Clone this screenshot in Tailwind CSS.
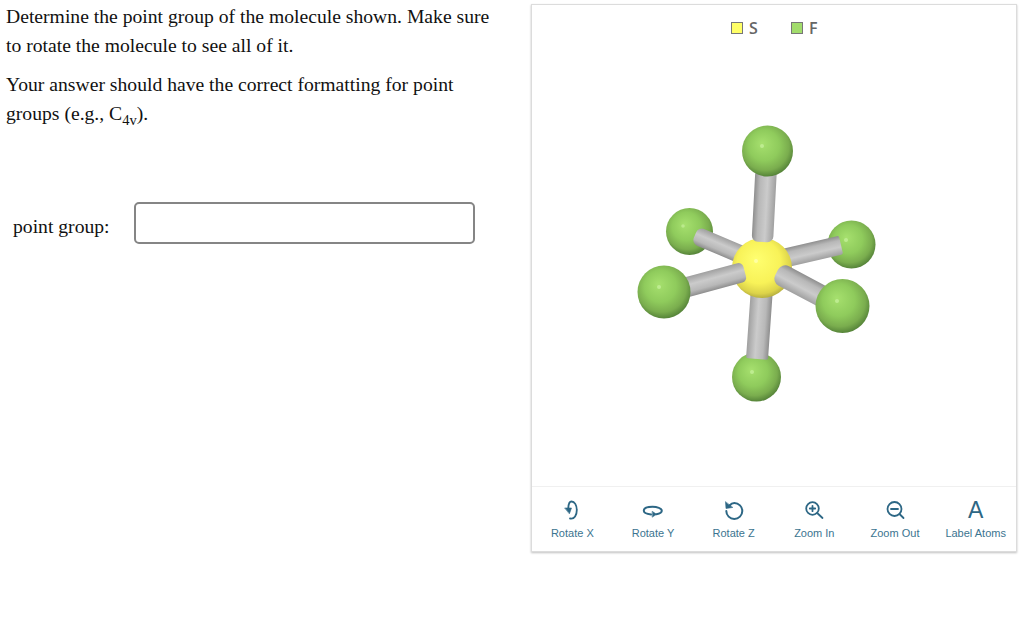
<!DOCTYPE html>
<html>
<head>
<meta charset="utf-8">
<script src="https://cdn.jsdelivr.net/npm/@tailwindcss/browser@4"></script>
</head>
<body class="bg-white">
<div class="flex w-[1024px] h-[630px] overflow-hidden">
  <div class="w-[531px] shrink-0 pl-[6px] pt-[2px] font-['Liberation_Serif',serif] text-[19.65px] leading-[29px] text-[#111]">
    <p class="mb-[10px]">Determine the point group of the molecule shown. Make sure<br>to rotate the molecule to see all of it.</p>
    <p>Your answer should have the correct formatting for point<br>groups (e.g., C<sub class="text-[14.5px] leading-none align-[-1px]">4v</sub>).</p>
    <div class="flex items-center mt-[74px] pl-[7px]">
      <span class="w-[121px] pt-[6px]">point group:</span>
      <div class="w-[341px] h-[42px] border-2 border-[#858585] rounded-[5px] bg-white"></div>
    </div>
  </div>
  <div class="w-[486px] h-[548px] mt-[4px] flex flex-col border border-[#dcdcdc] shadow-[0_1px_2px_rgba(0,0,0,0.25)] bg-white">
    <div class="h-[44px] flex items-start justify-center gap-[34px] pt-[13px] font-['Open_Sans',sans-serif] text-[16px] leading-[20px] font-semibold text-[#666]">
      <div class="flex items-center gap-[6px] w-[26px]"><span class="w-[12px] h-[12px] shrink-0 bg-[#ffff66] border-[1.5px] border-[#777]"></span>S</div>
      <div class="flex items-center gap-[6px] w-[26px]"><span class="w-[12px] h-[12px] shrink-0 bg-[#a2dc6c] border-[1.5px] border-[#777]"></span>F</div>
    </div>
    <svg class="block flex-1 w-full" width="484" height="437" viewBox="532 49 484 437">
      <defs>
        <radialGradient id="g" cx="0.47" cy="0.43" r="0.6" fx="0.39" fy="0.35">
          <stop offset="0" stop-color="#a6e06e"/>
          <stop offset="0.5" stop-color="#8fcb5c"/>
          <stop offset="0.78" stop-color="#7aad4e"/>
          <stop offset="1" stop-color="#4d7a34"/>
        </radialGradient>
        <radialGradient id="y" cx="0.48" cy="0.43" r="0.6" fx="0.4" fy="0.35">
          <stop offset="0" stop-color="#ffff70"/>
          <stop offset="0.6" stop-color="#f8f258"/>
          <stop offset="0.85" stop-color="#dcd34a"/>
          <stop offset="1" stop-color="#a8a23c"/>
        </radialGradient>
        <linearGradient id="b" x1="0" y1="0" x2="0" y2="1">
          <stop offset="0" stop-color="#a0a0a0"/>
          <stop offset="0.4" stop-color="#cbcbcb"/>
          <stop offset="0.75" stop-color="#b8b8b8"/>
          <stop offset="1" stop-color="#8e8e8e"/>
        </linearGradient>
      </defs>
      <circle cx="689.5" cy="231.5" r="23.5" fill="url(#g)"/>
      <circle cx="683" cy="226" r="1.8" fill="#c4f09a" opacity="0.7"/>
      <circle cx="851.5" cy="244.5" r="24" fill="url(#g)"/>
      <circle cx="846" cy="240" r="2" fill="#c4f09a" opacity="0.8"/>
      <circle cx="756.5" cy="377" r="24.5" fill="url(#g)"/>
      <circle cx="752" cy="372" r="2" fill="#c4f09a" opacity="0.8"/>
      <rect x="0" y="-9" width="60" height="18" rx="6" fill="url(#b)" transform="translate(695 235) rotate(23)"/>
      <rect x="0" y="-9.5" width="64" height="19" rx="2" fill="url(#b)" transform="translate(841 245) rotate(167)"/>
      <rect x="0" y="-11" width="68" height="22" rx="2" fill="url(#b)" transform="translate(757 359) rotate(-86)"/>
      <circle cx="762" cy="268" r="30" fill="url(#y)"/>
      <circle cx="756" cy="261" r="2" fill="#ffffb0" opacity="0.8"/>
      <rect x="-3" y="-10.75" width="73" height="21.5" rx="6" fill="url(#b)" transform="translate(766 172) rotate(93)"/>
      <rect x="-3" y="-10" width="70" height="20" rx="5" fill="url(#b)" transform="translate(680 289) rotate(-15)"/>
      <rect x="-3" y="-11" width="60" height="22" rx="8" fill="url(#b)" transform="translate(827 299) rotate(-152)"/>
      <circle cx="767.5" cy="151" r="25.5" fill="url(#g)"/>
      <circle cx="762" cy="146" r="2" fill="#c4f09a" opacity="0.8"/>
      <circle cx="664" cy="292" r="26.5" fill="url(#g)"/>
      <circle cx="659" cy="287" r="2" fill="#c4f09a" opacity="0.8"/>
      <circle cx="842.5" cy="306" r="27" fill="url(#g)"/>
      <circle cx="837" cy="301" r="2" fill="#c4f09a" opacity="0.8"/>
    </svg>
    <div class="h-[65px] grid grid-cols-6 border-t border-[#f0f0f0] font-['Liberation_Sans',sans-serif] text-[11px] leading-[14px] text-[#3b7490]">
      <div class="flex flex-col items-center pt-[11px] gap-[4px]">
        <svg class="w-[24px] h-[24px]" viewBox="0 0 24 24" fill="none" stroke="#2d6785" stroke-width="1.8" stroke-linecap="round">
          <path d="M10 20.5C14.5 21.5 16.8 17 16.8 12C16.8 7 14.5 3.5 11.5 3.5C9.5 3.5 8.5 6 8.3 10"/>
          <path d="M5 10L11.5 10L9.5 15.5Z" fill="#2d6785" stroke-width="0.6"/>
        </svg>
        <span>Rotate X</span>
      </div>
      <div class="flex flex-col items-center pt-[11px] gap-[4px]">
        <svg class="w-[24px] h-[24px]" viewBox="0 0 24 24" fill="none" stroke="#2d6785" stroke-width="2" stroke-linecap="round">
          <path d="M10 16.5C5.5 16 2.8 14.8 2.8 12.8C2.8 10.2 7 8.8 11.5 8.8C16 8.8 20.8 10.2 20.8 12.8C20.8 14.8 18.5 15.8 15.5 16.3"/>
          <path d="M11.5 13.5L15.5 16.3L11.5 19Z" fill="#2d6785" stroke-width="0.6"/>
        </svg>
        <span>Rotate Y</span>
      </div>
      <div class="flex flex-col items-center pt-[11px] gap-[4px]">
        <svg class="w-[24px] h-[24px]" viewBox="0 0 24 24" fill="none" stroke="#2d6785" stroke-width="2" stroke-linecap="round">
          <path d="M7.5 7.5C8.8 6 10.3 5 12.3 5C16.7 5 20.3 8.6 20.3 13C20.3 17.4 16.7 21 12.3 21C7.9 21 4.3 17.4 4.3 13"/>
          <path d="M3.5 4L4 10.5L10.5 9.5Z" fill="#2d6785" stroke-width="0.6"/>
        </svg>
        <span>Rotate Z</span>
      </div>
      <div class="flex flex-col items-center pt-[11px] gap-[4px]">
        <svg class="w-[24px] h-[24px]" viewBox="0 0 24 24" fill="none" stroke="#2d6785" stroke-width="1.8" stroke-linecap="round">
          <circle cx="10.5" cy="10.5" r="6.3"/>
          <path d="M15.2 15L20.5 20"/>
          <path d="M7.8 10.5H13.2M10.5 7.8V13.2"/>
        </svg>
        <span>Zoom In</span>
      </div>
      <div class="flex flex-col items-center pt-[11px] gap-[4px]">
        <svg class="w-[24px] h-[24px]" viewBox="0 0 24 24" fill="none" stroke="#2d6785" stroke-width="1.8" stroke-linecap="round">
          <circle cx="11.5" cy="11" r="7"/>
          <path d="M16.5 16L20.5 20"/>
          <path d="M8 11H15"/>
        </svg>
        <span>Zoom Out</span>
      </div>
      <div class="flex flex-col items-center pt-[11px] gap-[4px]">
        <span class="h-[24px] text-[23px] leading-[25px] text-[#2d6785]">A</span>
        <span>Label Atoms</span>
      </div>
    </div>
  </div>
</div>
</body>
</html>
